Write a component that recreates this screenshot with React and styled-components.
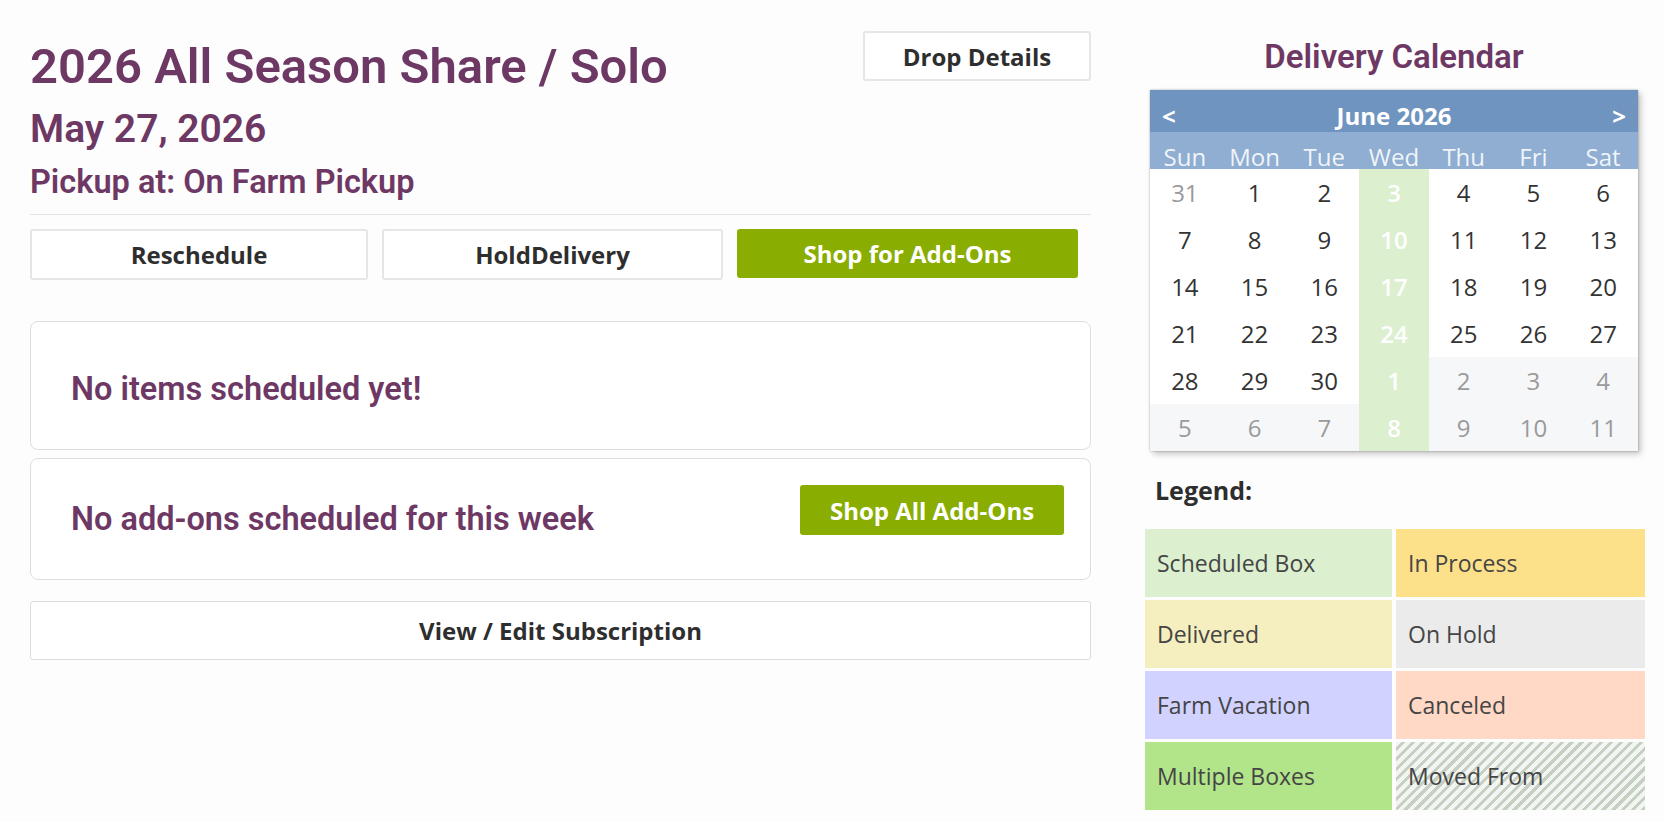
import React from "react";
import styled, { createGlobalStyle } from "styled-components";

const Global = createGlobalStyle`
  html, body { margin: 0; padding: 0; background: #fdfdfd; }
  body { font-family: "Open Sans", "Liberation Sans", sans-serif; color: #333; }
  * { box-sizing: border-box; }
`;

const PURPLE = "#6e3865";
const GREEN = "#89ad00";

const Page = styled.div`
  display: flex;
  align-items: flex-start;
  gap: 53px;
  padding-left: 30px;
  width: 1664px;
  height: 822px;
  overflow: hidden;
`;

const Main = styled.main`
  width: 1061px;
  display: flex;
  flex-direction: column;
`;

const HeaderRow = styled.div`
  display: flex;
  justify-content: space-between;
  align-items: flex-start;
  padding-top: 31px;
`;

const TitleBlock = styled.div`
  margin-top: 8px;
  display: flex;
  flex-direction: column;
`;

const Heading = styled.div`
  font-family: Roboto, "Liberation Sans", sans-serif;
  font-weight: 600;
  color: ${PURPLE};
  font-size: ${(p) => p.$size}px;
  line-height: ${(p) => p.$lh}px;
  margin-top: ${(p) => p.$mt || 0}px;
`;

const OutlineButton = styled.button`
  font-family: "Open Sans", "Liberation Sans", sans-serif;
  font-weight: 700;
  font-size: 24px;
  color: #2e2e2e;
  background: #fff;
  border: 2px solid #e6e6e6;
  border-radius: 3px;
  height: ${(p) => p.$h || 51}px;
  width: ${(p) => (p.$w ? `${p.$w}px` : "100%")};
  padding: 0;
  cursor: pointer;
`;

const GreenButton = styled.button`
  font-family: "Open Sans", "Liberation Sans", sans-serif;
  font-weight: 700;
  font-size: 24px;
  color: #fff;
  background: ${GREEN};
  border: none;
  border-radius: 3px;
  height: ${(p) => p.$h || 50}px;
  width: ${(p) => (p.$w ? `${p.$w}px` : "100%")};
  padding: 0;
  cursor: pointer;
  flex-shrink: 0;
`;

const Divider = styled.hr`
  border: none;
  height: 1px;
  background: #e4e4e4;
  margin: 14px 0 0;
`;

const ButtonRow = styled.div`
  display: grid;
  grid-template-columns: 338px 341px 341px;
  gap: 14px;
  margin-top: 14px;
`;

const Card = styled.section`
  background: #fff;
  border: 1px solid #dedede;
  border-radius: 8px;
  height: ${(p) => p.$h}px;
  margin-top: ${(p) => p.$mt}px;
  display: flex;
  align-items: center;
  justify-content: space-between;
  padding: ${(p) => p.$pt || 0}px 26px 0 40px;
`;

const CardText = styled.div`
  font-family: Roboto, "Liberation Sans", sans-serif;
  font-weight: 600;
  font-size: 32.5px;
  color: ${PURPLE};
`;

const CardButton = styled(GreenButton)`
  margin-bottom: 18px;
`;

const WideButton = styled(OutlineButton)`
  margin-top: 21px;
  border-width: 1px;
  border-color: #dcdcdc;
`;

const Side = styled.aside`
  width: 500px;
  display: flex;
  flex-direction: column;
`;

const SideTitle = styled.div`
  font-family: Roboto, "Liberation Sans", sans-serif;
  font-weight: 600;
  font-size: 33px;
  line-height: 36px;
  color: ${PURPLE};
  text-align: center;
  width: 488px;
  margin: 39px 0 0 6px;
`;

const Calendar = styled.div`
  width: 488px;
  margin: 15px 0 0 6px;
  background: #fff;
  box-shadow: 0 0 2px rgba(0, 0, 0, 0.3), 3px 3px 6px rgba(0, 0, 0, 0.22);
`;

const MonthBar = styled.div`
  height: 42px;
  overflow: hidden;
  display: flex;
  justify-content: space-between;
  align-items: flex-start;
  padding: 0 12px;
  background: #6f94c0;
  color: #fff;
  font-weight: 700;
  font-size: 24px;
  line-height: 51px;
`;

const DayNames = styled.div`
  height: 37px;
  display: grid;
  grid-template-columns: repeat(7, 1fr);
  background: #8faed2;
  color: rgba(255, 255, 255, 0.88);
  font-size: 24px;
  line-height: 50px;
  text-align: center;
`;

const Days = styled.div`
  position: relative;
  display: grid;
  grid-template-columns: repeat(7, 1fr);
  grid-auto-rows: 47px;
`;

const dayColors = {
  cur: { bg: "#fff", fg: "#333" },
  prev: { bg: "#fff", fg: "#9a9a9a" },
  other: { bg: "#f6f7f9", fg: "#9a9a9a" },
  sched: { bg: "#dcefcf", fg: "#fff" },
};

const Day = styled.div`
  text-align: center;
  font-size: 24px;
  line-height: 47px;
  background: ${(p) => dayColors[p.$kind].bg};
  color: ${(p) => dayColors[p.$kind].fg};
  font-weight: ${(p) => (p.$kind === "sched" ? 600 : 400)};
`;

const LegendLabel = styled.div`
  font-weight: 700;
  font-size: 25px;
  line-height: 30px;
  color: #2e2e2e;
  margin: 24px 0 0 11px;
`;

const LegendGrid = styled.div`
  display: grid;
  grid-template-columns: 247px 249px;
  grid-auto-rows: 68px;
  column-gap: 4px;
  row-gap: 3px;
  margin-top: 24px;
  margin-left: 1px;
`;

const LegendCell = styled.div`
  display: flex;
  align-items: center;
  padding-left: 12px;
  font-size: 23px;
  color: #454545;
  background: ${(p) => p.$bg};
`;

const STRIPES =
  "repeating-linear-gradient(135deg, #f3f5f2 0px, #f3f5f2 4px, #c5cfc2 4px, #c5cfc2 7px)";

const legend = [
  ["Scheduled Box", "#dcefcf"],
  ["In Process", "#fce08a"],
  ["Delivered", "#f5efc0"],
  ["On Hold", "#ebebeb"],
  ["Farm Vacation", "#d2d2ff"],
  ["Canceled", "#ffd9c6"],
  ["Multiple Boxes", "#b2e58a"],
  ["Moved From", STRIPES],
];

const weekDays = ["Sun", "Mon", "Tue", "Wed", "Thu", "Fri", "Sat"];

const weeks = [
  [[31, "prev"], [1], [2], [3, "sched"], [4], [5], [6]],
  [[7], [8], [9], [10, "sched"], [11], [12], [13]],
  [[14], [15], [16], [17, "sched"], [18], [19], [20]],
  [[21], [22], [23], [24, "sched"], [25], [26], [27]],
  [[28], [29], [30], [1, "sched"], [2, "other"], [3, "other"], [4, "other"]],
  [[5, "other"], [6, "other"], [7, "other"], [8, "sched"], [9, "other"], [10, "other"], [11, "other"]],
];

export default function App() {
  return (
    <>
      <Global />
      <Page>
        <Main>
          <HeaderRow>
            <TitleBlock>
              <Heading $size={49} $lh={56}>2026 All Season Share / Solo</Heading>
              <Heading $size={39} $lh={44} $mt={12}>May 27, 2026</Heading>
              <Heading $size={32.5} $lh={36} $mt={13}>Pickup at: On Farm Pickup</Heading>
            </TitleBlock>
            <OutlineButton $w={228} $h={50}>Drop Details</OutlineButton>
          </HeaderRow>
          <Divider />
          <ButtonRow>
            <OutlineButton>Reschedule</OutlineButton>
            <OutlineButton>HoldDelivery</OutlineButton>
            <GreenButton $h={49}>Shop for Add-Ons</GreenButton>
          </ButtonRow>
          <Card $h={129} $mt={41} $pt={7}>
            <CardText>No items scheduled yet!</CardText>
          </Card>
          <Card $h={122} $mt={8}>
            <CardText>No add-ons scheduled for this week</CardText>
            <CardButton $w={264} $h={50}>Shop All Add-Ons</CardButton>
          </Card>
          <WideButton $h={59}>View / Edit Subscription</WideButton>
        </Main>
        <Side>
          <SideTitle>Delivery Calendar</SideTitle>
          <Calendar>
            <MonthBar>
              <span>&lt;</span>
              <span>June 2026</span>
              <span>&gt;</span>
            </MonthBar>
            <DayNames>
              {weekDays.map((d) => (
                <div key={d}>{d}</div>
              ))}
            </DayNames>
            <Days>
              {weeks.flat().map(([n, kind], i) => (
                <Day key={i} $kind={kind || "cur"}>{n}</Day>
              ))}
            </Days>
          </Calendar>
          <LegendLabel>Legend:</LegendLabel>
          <LegendGrid>
            {legend.map(([label, bg]) => (
              <LegendCell key={label} $bg={bg}>{label}</LegendCell>
            ))}
          </LegendGrid>
        </Side>
      </Page>
    </>
  );
}
